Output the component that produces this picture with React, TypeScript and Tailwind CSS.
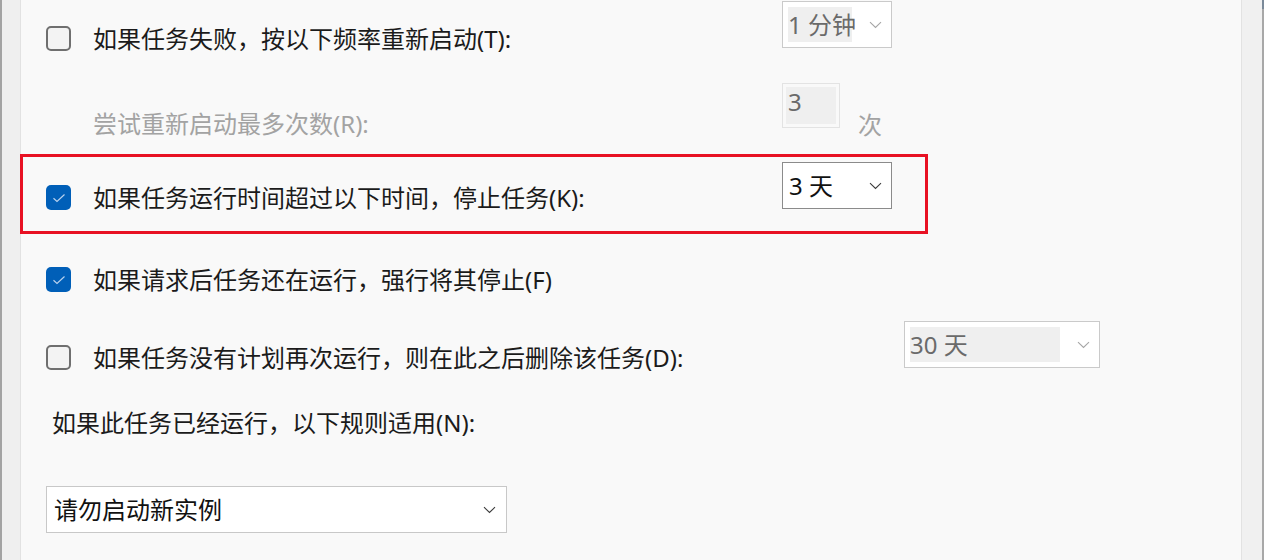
import React from "react";

const font = { fontFamily: '"Noto Sans", "Noto Sans CJK SC", sans-serif' };

const Chevron = ({ disabled }: { disabled?: boolean }) => (
  <svg width="13" height="8" viewBox="0 0 13 8" className="shrink-0">
    <path
      d="M1 1.2 L6.5 6.5 L12 1.2"
      fill="none"
      stroke={disabled ? "#a6a6a6" : "#3c3c3c"}
      strokeWidth="1.1"
    />
  </svg>
);

const Checkbox = ({ checked }: { checked?: boolean }) =>
  checked ? (
    <div className="w-[25px] h-[25px] rounded-[5px] bg-[#005fb8] flex items-center justify-center shrink-0">
      <svg width="14" height="10" viewBox="0 0 14 10">
        <path d="M1.5 5.2 L5 8.4 L12.5 1.5" fill="none" stroke="#b9d2ee" strokeWidth="1.2" />
      </svg>
    </div>
  ) : (
    <div className="w-[25px] h-[25px] rounded-[5px] border-2 border-[#6f6f6f] bg-[#f3f3f3] shrink-0" />
  );

const Label = ({ children, disabled }: { children: React.ReactNode; disabled?: boolean }) => (
  <span className={`text-[24px] leading-[25px] whitespace-nowrap ${disabled ? "text-[#a3a3a3]" : "text-[#1b1b1b]"}`}>
    {children}
  </span>
);

export default function App() {
  return (
    <div className="w-[1264px] h-[560px] flex overflow-hidden bg-[#f9f9f9]" style={font}>
      {/* left window edge */}
      <div className="w-[20px] h-full flex shrink-0">
        <div className="w-[2px] h-full bg-[#a3a3a3]" />
        <div className="flex-1 h-full bg-[#efefef]" />
      </div>

      {/* settings panel */}
      <div className="flex-1 h-full border-l border-[#e2e2e2] border-r flex flex-col">
        {/* row 1 */}
        <div className="h-[84px] flex items-start shrink-0">
          <div className="w-[761px] pl-[25px] mt-[26px] flex items-center gap-[22px]">
            <Checkbox />
            <Label>如果任务失败，按以下频率重新启动(T):</Label>
          </div>
          <div className="mt-[1px] w-[110px] h-[47px] bg-white border border-[#cacaca] flex items-center pl-[5px] pr-[9px]">
            <div className="w-[64px] h-[35px] bg-[#efefef] flex items-center text-[24px] text-[#6a6a6a] whitespace-nowrap">
              1 分钟
            </div>
            <div className="flex-1" />
            <Chevron disabled />
          </div>
        </div>

        {/* row 2 */}
        <div className="h-[70px] flex items-start shrink-0">
          <div className="w-[761px] pl-[72px] mt-[27px]">
            <Label disabled>尝试重新启动最多次数(R):</Label>
          </div>
          <div className="-mt-px w-[58px] h-[45px] border border-[#e3e3e3] p-[3px]">
            <div className="w-full h-full bg-[#efefef] flex items-start pl-[2px] text-[24px] leading-[30px] text-[#6a6a6a]">
              3
            </div>
          </div>
          <div className="ml-[18px] mt-[28px] text-[24px] leading-[25px] text-[#a3a3a3]">次</div>
        </div>

        {/* row 3 - highlighted */}
        <div className="-ml-px w-[908px] h-[80px] border-[3px] border-[#e81123] flex items-start shrink-0">
          <div className="w-[759px] pl-[23px] mt-[28px] flex items-center gap-[22px]">
            <Checkbox checked />
            <Label>如果任务运行时间超过以下时间，停止任务(K):</Label>
          </div>
          <div className="mt-[5px] w-[110px] h-[47px] bg-white border border-[#8b8b8b] flex items-center pl-[6px] pr-[9px]">
            <span className="text-[24px] text-[#111] whitespace-nowrap">3 天</span>
            <div className="flex-1" />
            <Chevron />
          </div>
        </div>

        {/* row 4 */}
        <div className="h-[86px] flex items-start shrink-0">
          <div className="pl-[25px] mt-[33px] flex items-center gap-[22px]">
            <Checkbox checked />
            <Label>如果请求后任务还在运行，强行将其停止(F)</Label>
          </div>
        </div>

        {/* row 5 */}
        <div className="h-[68px] flex items-start shrink-0">
          <div className="w-[883px] pl-[25px] mt-[25px] flex items-center gap-[22px]">
            <Checkbox />
            <Label>如果任务没有计划再次运行，则在此之后删除该任务(D):</Label>
          </div>
          <div className="mt-[1px] w-[196px] h-[47px] bg-white border border-[#cacaca] flex items-center pl-[5px] pr-[9px]">
            <div className="w-[150px] h-[35px] bg-[#efefef] flex items-center text-[24px] text-[#6a6a6a] whitespace-nowrap">
              30 天
            </div>
            <div className="flex-1" />
            <Chevron disabled />
          </div>
        </div>

        {/* row 6 */}
        <div className="pl-[31px] mt-[22px] shrink-0">
          <Label>如果此任务已经运行，以下规则适用(N):</Label>
        </div>

        <div className="ml-[25px] mt-[48px] w-[461px] h-[47px] bg-white border border-[#c8c8c8] flex items-center pl-[7px] pr-[10px] shrink-0">
          <span className="text-[24px] text-[#111] whitespace-nowrap">请勿启动新实例</span>
          <div className="flex-1" />
          <Chevron />
        </div>
      </div>

      {/* right window edge */}
      <div className="w-[22px] h-full flex shrink-0">
        <div className="flex-1 h-full bg-[#f0f0f0]" />
        <div className="w-[2px] h-full bg-[#a8a8a8] flex flex-col">
          <div className="h-[9px] bg-[#7b8a99]" />
        </div>
      </div>
    </div>
  );
}
